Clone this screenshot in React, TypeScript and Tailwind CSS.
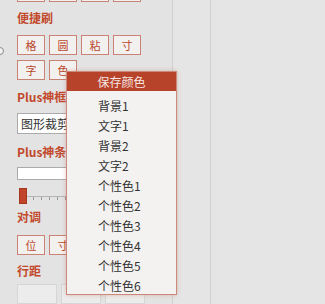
import React from 'react';

const btn =
  'w-[28px] h-[20px] border border-[#c98374] bg-[#f3f1ef] text-[#b9482d] text-[11px] leading-[18px] text-center';
const label = 'h-[16px] leading-[16px] text-[12px] font-bold text-[#c2492c]';

const colors = ['背景1', '文字1', '背景2', '文字2', '个性色1', '个性色2', '个性色3', '个性色4', '个性色5', '个性色6'];

function Row({ items }: { items: string[] }) {
  return (
    <div className="flex gap-[4px]">
      {items.map((t, i) => (
        <div key={i} className={btn}>
          {t}
        </div>
      ))}
    </div>
  );
}

export default function App() {
  return (
    <div className="relative w-[325px] h-[304px] overflow-hidden flex bg-[#e5e5e5] font-['Noto_Sans_CJK_SC','Microsoft_YaHei',sans-serif]">
      <div className="w-[173px] shrink-0 -mt-[18px] border-r border-[#cfcfcf] bg-[#e3e3e3] pl-[17px] flex flex-col">
        <Row items={['', '', '', '']} />
        <div className={`mt-[8px] ${label}`}>便捷刷</div>
        <div className="mt-[9px]">
          <Row items={['格', '圆', '粘', '寸']} />
        </div>
        <div className="mt-[5px]">
          <Row items={['字', '色']} />
        </div>
        <div className={`mt-[9px] ${label}`}>Plus神框</div>
        <div className="mt-[8px] w-[125px] h-[21px] border border-[#ababab] bg-white pl-[3px] text-[12px] leading-[19px] text-[#333]">
          图形裁剪
        </div>
        <div className={`mt-[10px] ${label}`}>Plus神条</div>
        <div className="mt-[7px] w-[125px] h-[21px] border border-[#ababab] bg-white" />
        <div className="mt-[8px] relative w-[125px] h-[16px]">
          <div className="absolute left-[4px] right-0 top-[8px] h-[1px] bg-[#b4b4b4]" />
          <div className="absolute left-[2px] top-0 w-[8px] h-[16px] bg-[#c0452a] border border-[#a3361f]" />
        </div>
        <div className="flex gap-[7px] pl-[8px] h-[3px]">
          {Array.from({ length: 12 }).map((_, i) => (
            <div key={i} className="w-[1px] h-[3px] bg-[#9a9a9a]" />
          ))}
        </div>
        <div className={`mt-[9px] ${label}`}>对调</div>
        <div className="mt-[10px]">
          <Row items={['位', '寸', '', '']} />
        </div>
        <div className={`mt-[8px] ${label}`}>行距</div>
        <div className="mt-[5px] flex gap-[4px]">
          {[0, 1, 2].map((i) => (
            <div key={i} className="w-[40px] h-[20px] border border-[#d6d6d6] bg-[#ececec]" />
          ))}
        </div>
      </div>
      <div className="w-[38px] shrink-0 border-r border-[#cfcfcf]" />
      <div className="flex-1" />

      <span className="absolute -left-[4px] top-[47px] w-[8px] h-[8px] rounded-full border border-[#8a8a8a] bg-[#f2f2f2]" />

      <div className="absolute left-[66px] top-[71px] w-[111px] h-[224px] border border-[#c98a7c] bg-[#f3f2f1] shadow-[0_0_4px_rgba(190,90,60,0.35)] flex flex-col">
        <div className="h-[19px] bg-[#b8432b] text-[#f6e7e2] text-[12px] leading-[19px] text-center">保存颜色</div>
        <div className="mt-[2px] mx-[1px] h-[2px] bg-[#dcbcb2]" />
        <div className="mt-[3px] flex flex-col">
          {colors.map((c) => (
            <div key={c} className="h-[20px] leading-[20px] pl-[31px] text-[12px] text-[#333]">
              {c}
            </div>
          ))}
        </div>
      </div>
    </div>
  );
}
